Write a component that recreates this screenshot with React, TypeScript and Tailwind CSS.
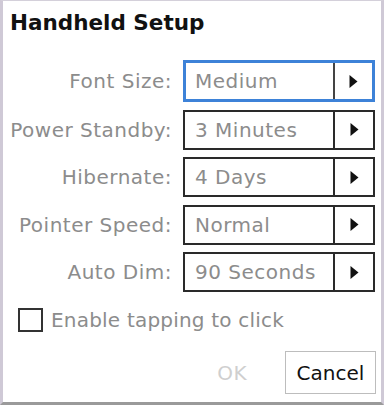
const rows = [
  { label: 'Font Size:', value: 'Medium', focused: true },
  { label: 'Power Standby:', value: '3 Minutes' },
  { label: 'Hibernate:', value: '4 Days' },
  { label: 'Pointer Speed:', value: 'Normal' },
  { label: 'Auto Dim:', value: '90 Seconds' },
]

function Arrow() {
  return (
    <svg width="9" height="13" viewBox="0 0 9 13">
      <path d="M0.5 0 L8.5 6.5 L0.5 13 Z" fill="#111" />
    </svg>
  )
}

export default function App() {
  return (
    <div
      className="flex h-[405px] w-[384px] flex-col border-t border-b-[3px] border-l-[3px] border-r-[3px] border-t-[#d4d0da] border-b-[#9a9a9a] border-l-[#cfc9d6] border-r-[#cfc9d6] bg-white tracking-[0.5px]"
      style={{ fontFamily: '"DejaVu Sans", sans-serif' }}
    >
      <h1 className="mt-[8px] ml-[7px] text-[21.5px] leading-[28px] font-bold tracking-normal text-[#111]">
        Handheld Setup
      </h1>
      <div className="mt-[23px] flex flex-col gap-[7.5px]">
        {rows.map((row) => (
          <div key={row.label} className="flex items-center">
            <div className="w-[169px] text-right text-[20px] text-[#8c8c8c]">{row.label}</div>
            <div
              className={
                row.focused
                  ? 'ml-[11px] flex h-[42px] w-[192px] border-[3px] border-[#3d82d8]'
                  : 'ml-[11px] flex h-[40px] w-[192px] border-2 border-[#2a2a2a]'
              }
            >
              <div
                className={
                  row.focused
                    ? 'flex flex-1 items-center border-r-2 border-[#444] pl-[9px] text-[20px] text-[#8c8c8c]'
                    : 'flex flex-1 items-center border-r-2 border-[#2a2a2a] pl-[10px] text-[20px] text-[#8c8c8c]'
                }
              >
                {row.value}
              </div>
              <div
                className={
                  row.focused
                    ? 'flex w-[37px] items-center justify-center'
                    : 'flex w-[38px] items-center justify-center'
                }
              >
                <Arrow />
              </div>
            </div>
          </div>
        ))}
      </div>
      <label className="mt-[13px] ml-[15px] flex items-center gap-[8px]">
        <span className="h-[24px] w-[25px] border-2 border-[#333]" />
        <span className="text-[20px] tracking-[0.2px] text-[#8c8c8c]">Enable tapping to click</span>
      </label>
      <div className="mt-[16px] mr-[5px] flex items-center justify-end gap-[38px]">
        <span className="text-[20px] text-[#cfcfcf]">OK</span>
        <button
          type="button"
          className="h-[43px] w-[91px] border border-[#bdbdbd] text-[20px] tracking-normal text-[#111]"
        >
          Cancel
        </button>
      </div>
    </div>
  )
}
